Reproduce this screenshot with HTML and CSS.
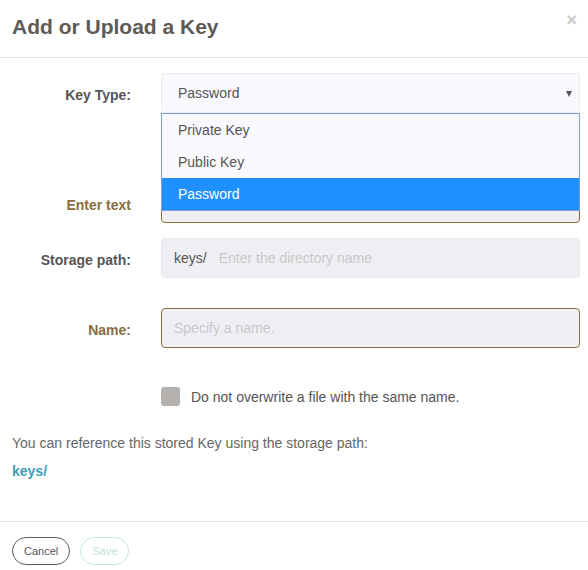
FILE: index.html
```html
<!DOCTYPE html>
<html>
<head>
<meta charset="utf-8">
<link rel="stylesheet" href="styles.css">
</head>
<body>
<div class="modal">
  <div class="modal-header">
    <h4 class="title">Add or Upload a Key</h4>
    <span class="close">&times;</span>
  </div>
  <div class="modal-body">
    <div class="row row-type">
      <label class="label">Key Type:</label>
      <div class="field">
        <div class="select">
          <span>Password</span>
          <span class="caret"></span>
        </div>
        <ul class="menu">
          <li>Private Key</li>
          <li>Public Key</li>
          <li class="active">Password</li>
        </ul>
      </div>
    </div>
    <div class="row row-text">
      <label class="label warn">Enter text</label>
      <div class="field">
        <div class="input textarea warn-border"></div>
      </div>
    </div>
    <div class="row row-path">
      <label class="label">Storage path:</label>
      <div class="field">
        <div class="input path"><span class="prefix">keys/</span><span class="ph">Enter the directory name</span></div>
      </div>
    </div>
    <div class="row row-name">
      <label class="label warn">Name:</label>
      <div class="field">
        <div class="input warn-border"><span class="ph">Specify a name.</span></div>
      </div>
    </div>
    <div class="row row-check">
      <div class="label"></div>
      <div class="field check">
        <span class="box"></span>
        <span>Do not overwrite a file with the same name.</span>
      </div>
    </div>
    <p class="note">You can reference this stored Key using the storage path:</p>
    <p class="path-link">keys/</p>
  </div>
  <div class="modal-footer">
    <button class="btn btn-cancel">Cancel</button>
    <button class="btn btn-save">Save</button>
  </div>
</div>
</body>
</html>
```

FILE: styles.css
```css
* { box-sizing: border-box; }
html, body { margin: 0; padding: 0; background: #fff; }
body {
  font-family: "Liberation Sans", Arial, Helvetica, sans-serif;
  font-size: 14px;
  color: #555;
  width: 588px;
}
.modal { width: 588px; }
.modal-header {
  position: relative;
  height: 58px;
  border-bottom: 1px solid #e5e5e5;
  padding: 15px 12px 0;
}
.title {
  margin: 0;
  font-size: 21px;
  font-weight: bold;
  color: #5e5a55;
  line-height: 24px;
}
.close {
  position: absolute;
  right: 11px;
  top: 10px;
  font-size: 18px;
  font-weight: bold;
  color: #ccc;
  line-height: 20px;
}
.modal-body { padding: 15px 8px 0 12px; }
.row {
  display: flex;
  align-items: center;
}
.label {
  width: 119px;
  flex: none;
  text-align: right;
  font-weight: bold;
  color: #555;
  padding-top: 3px;
}
.label.warn { color: #8a6d3b; }
.field {
  margin-left: 30px;
  width: 419px;
  position: relative;
}
.select {
  height: 40px;
  border: 1px solid #ebebeb;
  border-radius: 4px;
  background: #f9f9fd;
  display: flex;
  align-items: center;
  justify-content: space-between;
  padding: 0 7px 0 16px;
  color: #555;
}
.caret {
  width: 0; height: 0;
  border-left: 3px solid transparent;
  border-right: 3px solid transparent;
  border-top: 6px solid #555;
  margin-top: 1px;
}
.menu {
  position: absolute;
  left: 0; right: 0; top: 40px;
  margin: 0; padding: 0;
  list-style: none;
  background: #f9f9fd;
  border: 1px solid #7c9fd6;
  z-index: 5;
}
.menu li {
  height: 32px;
  line-height: 32px;
  padding-left: 16px;
  color: #555;
}
.menu li.active { background: #1e90ff; color: #fff; }
.input {
  height: 40px;
  border: 1px solid #e8e8ec;
  border-radius: 4px;
  background: #efeff3;
  display: flex;
  align-items: center;
  padding: 0 12px;
}
.warn-border { border-color: #8a6d3b; }
.prefix { color: #555; margin-right: 12px; }
.ph { color: #c9c9c9; }
.row-text { margin-top: 71px; }
.textarea { height: 39px; }
.row-path { margin-top: 15px; }
.row-name { margin-top: 30px; }
.row-check { margin-top: 39px; }
.check { display: flex; align-items: center; color: #555; }
.box {
  width: 19px; height: 19px;
  background: #b5b1ae;
  border-radius: 3px;
  margin-right: 11px;
}
.note { margin: 27px 0 0; line-height: 20px; color: #666; }
.path-link { margin: 8px 0 0; font-weight: bold; color: #3a9fb8; line-height: 20px; }
.modal-footer {
  margin-top: 40px;
  border-top: 1px solid #e5e5e5;
  padding: 15px 12px;
  display: flex;
  gap: 10px;
}
.btn {
  font-family: "Liberation Sans", Arial, sans-serif;
  font-size: 11px;
  height: 28px;
  border-radius: 14px;
  background: #fff;
  padding: 0 11px;
}
.btn-cancel { border: 1px solid #5e5a56; color: #555; }
.btn-save { border: 1px solid #c5eadb; color: #bde3d2; }
```
